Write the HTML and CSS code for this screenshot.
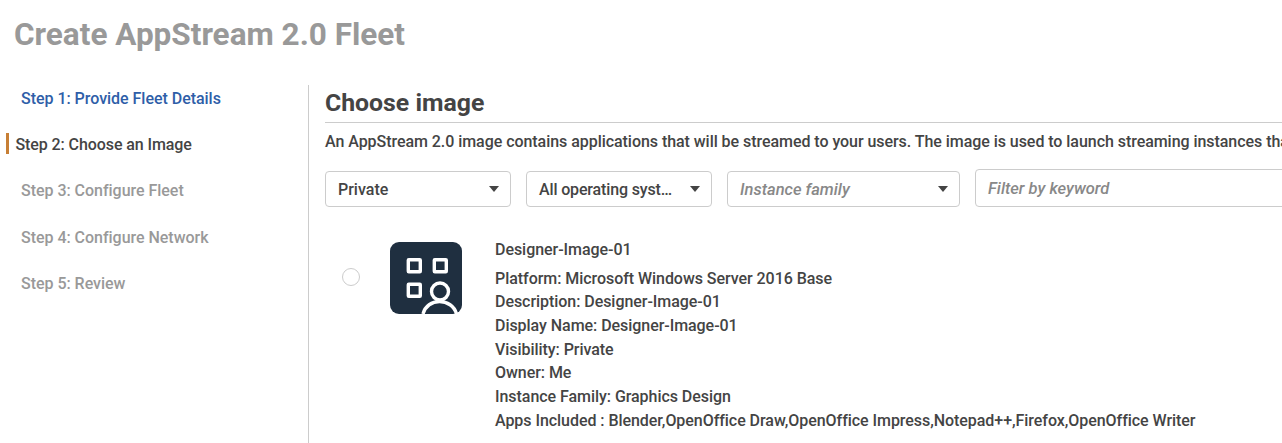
FILE: index.html
```html
<!DOCTYPE html>
<html lang="en">
<head>
<meta charset="utf-8">
<title>Create AppStream 2.0 Fleet</title>
<link rel="stylesheet" href="styles.css">
</head>
<body>
<h1 class="page-title">Create AppStream 2.0 Fleet</h1>
<div class="wizard">
  <nav class="steps">
    <div class="step done">Step 1: Provide Fleet Details</div>
    <div class="step current">Step 2: Choose an Image</div>
    <div class="step">Step 3: Configure Fleet</div>
    <div class="step">Step 4: Configure Network</div>
    <div class="step">Step 5: Review</div>
  </nav>
  <main class="content">
    <h2 class="section-title">Choose image</h2>
    <p class="intro">An AppStream 2.0 image contains applications that will be streamed to your users. The image is used to launch streaming instances that run the applications.</p>
    <div class="filters">
      <div class="select w-private"><span class="value">Private</span><span class="caret"></span></div>
      <div class="select w-os"><span class="value">All operating syst…</span><span class="caret"></span></div>
      <div class="select w-family"><span class="value placeholder">Instance family</span><span class="caret"></span></div>
      <div class="keyword"><span class="value placeholder">Filter by keyword</span></div>
    </div>
    <div class="image-row">
      <span class="radio"></span>
      <svg class="image-icon" width="72" height="72" viewBox="0 0 72 72" aria-hidden="true">
        <rect width="72" height="72" rx="9" fill="#1f2f40"/>
        <g fill="none" stroke="#fff" stroke-width="3.400">
          <rect x="18.300" y="17.800" width="12" height="12" rx="0.500"/>
          <rect x="44.300" y="17.800" width="12" height="12" rx="0.500"/>
          <rect x="18.300" y="42.300" width="12" height="12" rx="0.500"/>
          <circle cx="50" cy="49.500" r="8.500"/>
          <path d="M33 72c2-8 9-12.500 16.500-12.500s15 4.500 17 12.500"/>
        </g>
      </svg>
      <div class="details">
        <div class="name">Designer-Image-01</div>
        <div class="line">Platform: Microsoft Windows Server 2016 Base</div>
        <div class="line">Description: Designer-Image-01</div>
        <div class="line">Display Name: Designer-Image-01</div>
        <div class="line">Visibility: Private</div>
        <div class="line">Owner: Me</div>
        <div class="line">Instance Family: Graphics Design</div>
        <div class="line">Apps Included : Blender,OpenOffice Draw,OpenOffice Impress,Notepad++,Firefox,OpenOffice Writer</div>
      </div>
    </div>
  </main>
</div>
</body>
</html>
```
FILE: styles.css
```css
html, body { margin: 0; padding: 0; background: #fff; }
body {
  width: 1282px;
  height: 443px;
  overflow: hidden;
  font-family: Roboto, "Liberation Sans", sans-serif;
  font-weight: 500;
  font-size: 16px;
  color: #444;
}
.page-title {
  margin: 0;
  padding: 15px 0 0 14px;
  height: 85px;
  box-sizing: border-box;
  font-size: 31.500px;
  line-height: 40px;
  font-weight: 700;
  color: #999;
}
.wizard { display: flex; height: 358px; }
.steps {
  flex: none;
  box-sizing: border-box;
  border-right: 1px solid #ccc;
  width: 309px;
  padding-top: 3px;
}
.step {
  height: 46.200px;
  line-height: 22px;
  padding: 0 0 0 21px;
  color: #999;
  white-space: nowrap;
  letter-spacing: -0.030px;
}
.step.done { color: #2e5ea8; }
.step.current { color: #444; position: relative; padding-left: 15.500px; letter-spacing: -0.090px; }
.step.current::before {
  content: "";
  position: absolute;
  left: 6px;
  top: -1px;
  width: 3px;
  height: 21px;
  background: #c77f35;
}
.content { flex: 1; min-width: 0; padding-left: 16px; }
.section-title {
  margin: 0;
  height: 38px;
  box-sizing: border-box;
  padding-top: 3px;
  font-size: 24.800px;
  line-height: 29px;
  font-weight: 700;
  color: #444;
  border-bottom: 1px solid #ccc;
}
.intro {
  margin: 0;
  padding-top: 8px;
  height: 48px;
  box-sizing: border-box;
  line-height: 22px;
  white-space: nowrap;
  letter-spacing: -0.050px;
}
.filters { display: flex; gap: 15px; align-items: flex-end; }
.select, .keyword {
  height: 36px;
  box-sizing: border-box;
  border: 1px solid #ccc;
  border-radius: 4px;
  display: flex;
  align-items: center;
  padding: 0 11px 0 12px;
  flex: none;
}
.w-private { width: 186px; }
.w-os { width: 186px; }
.w-family { width: 233px; }
.keyword { width: 320px; height: 38px; margin-top: -2px; }
.value { flex: 1; white-space: nowrap; }
.w-os .value { letter-spacing: -0.150px; }
.placeholder { font-style: italic; color: #888; font-size: 16.500px; }
.caret {
  flex: none;
  width: 0;
  height: 0;
  margin: 0 0.500px;
  border-left: 5.500px solid transparent;
  border-right: 5.500px solid transparent;
  border-top: 6px solid #444;
}
.image-row { display: flex; margin-top: 35px; }
.radio {
  flex: none;
  width: 18px;
  height: 18px;
  box-sizing: border-box;
  border: 1px solid #ccc;
  border-radius: 50%;
  margin: 26px 0 0 17px;
}
.image-icon { flex: none; margin-left: 30px; }
.details { margin-left: 33px; margin-top: -3px; white-space: nowrap; letter-spacing: -0.050px; }
.name { height: 27.600px; line-height: 22px; }
.line { height: 23.700px; line-height: 24px; }
```
